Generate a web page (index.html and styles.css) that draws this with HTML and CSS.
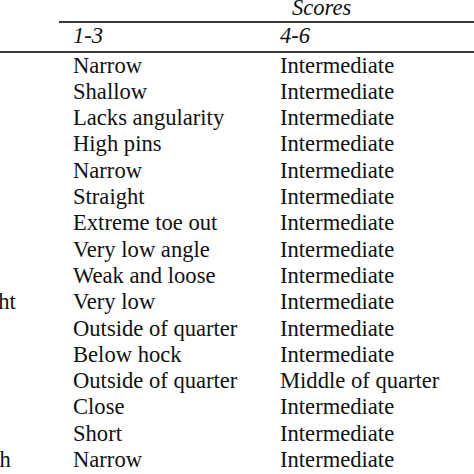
FILE: index.html
```html
<!DOCTYPE html>
<html>
<head>
<meta charset="utf-8">
<link rel="stylesheet" href="styles.css">
</head>
<body>
<table class="traits">
  <colgroup>
    <col class="c-label">
    <col class="c-low">
    <col class="c-mid">
  </colgroup>
  <thead>
    <tr class="top">
      <th class="label"></th>
      <th class="group" colspan="2"><span class="scores">Scores</span></th>
    </tr>
    <tr class="sub">
      <th class="label"></th>
      <th class="range">1-3</th>
      <th class="range">4-6</th>
    </tr>
  </thead>
  <tbody>
    <tr><td class="label">Stature</td><td>Narrow</td><td>Intermediate</td></tr>
    <tr><td class="label">Body depth</td><td>Shallow</td><td>Intermediate</td></tr>
    <tr><td class="label">Angularity</td><td>Lacks angularity</td><td>Intermediate</td></tr>
    <tr><td class="label">Rump angle</td><td>High pins</td><td>Intermediate</td></tr>
    <tr><td class="label">Rump width</td><td>Narrow</td><td>Intermediate</td></tr>
    <tr><td class="label">Rear legs</td><td>Straight</td><td>Intermediate</td></tr>
    <tr><td class="label">Rear view</td><td>Extreme toe out</td><td>Intermediate</td></tr>
    <tr><td class="label">Foot angle</td><td>Very low angle</td><td>Intermediate</td></tr>
    <tr><td class="label">Fore udder</td><td>Weak and loose</td><td>Intermediate</td></tr>
    <tr><td class="label">Rear udder height</td><td>Very low</td><td>Intermediate</td></tr>
    <tr><td class="label">Front teats</td><td>Outside of quarter</td><td>Intermediate</td></tr>
    <tr><td class="label">Udder depth</td><td>Below hock</td><td>Intermediate</td></tr>
    <tr><td class="label">Rear teats</td><td>Outside of quarter</td><td>Middle of quarter</td></tr>
    <tr><td class="label">Teat place</td><td>Close</td><td>Intermediate</td></tr>
    <tr><td class="label">Teat length</td><td>Short</td><td>Intermediate</td></tr>
    <tr><td class="label">Rear udder width</td><td>Narrow</td><td>Intermediate</td></tr>
  </tbody>
</table>
</body>
</html>
```
FILE: styles.css
```css
html, body {
  margin: 0;
  padding: 0;
  background: #fff;
  overflow: hidden;
}
body {
  width: 474px;
  height: 474px;
}
.traits {
  border-collapse: collapse;
  margin-left: -146px;
  margin-top: -5px;
  font-family: "Liberation Serif", "Times New Roman", serif;
  font-size: 22.6px;
  color: #111;
  width: 620px;
  table-layout: fixed;
}
.c-label { width: 205px; }
.c-low { width: 207px; }
.c-mid { width: 208px; }
.traits th,
.traits td {
  padding: 0 0 0 14px;
  height: 26.3px;
  line-height: 26.3px;
  text-align: left;
  font-weight: normal;
  white-space: nowrap;
  vertical-align: top;
}
.traits .label {
  padding: 0;
}
.traits .group {
  padding-left: 233px;
  border-bottom: 2px solid #3a3a3a;
}
.scores,
.range {
  font-style: italic;
}
.traits .sub th {
  border-bottom: 2px solid #3a3a3a;
  padding-bottom: 1px;
}
```
